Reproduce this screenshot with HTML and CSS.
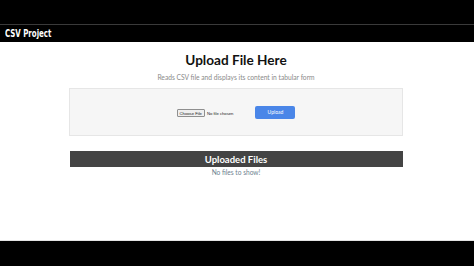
FILE: index.html
```html
<!DOCTYPE html>
<html>
<head>
<meta charset="utf-8">
<link rel="stylesheet" href="styles.css">
</head>
<body>
<div class="page">
  <div class="letterbox-top"></div>
  <nav class="nav"><span class="brand">CSV Project</span></nav>
  <main class="main">
    <h1 class="title">Upload File Here</h1>
    <p class="subtitle">Reads CSV file and displays its content in tabular form</p>
    <div class="upload-box">
      <div class="file-input">
        <span class="choose">Choose File</span>
        <span class="nofile">No file chosen</span>
      </div>
      <button class="upload-btn">Upload</button>
    </div>
    <div class="files-bar">Uploaded Files</div>
    <p class="empty">No files to show!</p>
  </main>
  <div class="letterbox-bottom"></div>
</div>
</body>
</html>
```
FILE: styles.css
```css
html, body {
  margin: 0;
  padding: 0;
  background: #fff;
}
.page {
  width: 474px;
  height: 266px;
  display: flex;
  flex-direction: column;
  overflow: hidden;
  font-family: Lato, "Open Sans", sans-serif;
}
.letterbox-top {
  height: 24px;
  background: #000;
  flex: none;
}
.nav {
  height: 17px;
  background: #000;
  border-top: 1px solid #3a3a3a;
  display: flex;
  align-items: center;
  padding-left: 5px;
  flex: none;
}
.brand {
  color: #fff;
  font-family: "DejaVu Sans Condensed", "DejaVu Sans", sans-serif;
  font-weight: bold;
  font-size: 10px;
  display: inline-block;
  transform: scaleX(0.78);
  transform-origin: left center;
}
.main {
  flex: 1;
  display: flex;
  flex-direction: column;
  align-items: center;
  padding-right: 2px;
}
.title {
  margin: 9px 0 0;
  font-size: 13.6px;
  font-weight: bold;
  color: #111;
  line-height: 18px;
}
.subtitle {
  margin: 4px 0 0;
  font-size: 6.7px;
  color: #8a8a8a;
  line-height: 9px;
}
.upload-box {
  margin-top: 6px;
  width: 332px;
  height: 46px;
  background: #f6f6f6;
  border: 1px solid #e6e6e6;
  display: flex;
  align-items: center;
  justify-content: center;
  gap: 22px;
  box-sizing: content-box;
}
.file-input {
  display: flex;
  align-items: center;
  gap: 2px;
  font-family: "Liberation Sans", Arial, sans-serif;
  font-size: 4.2px;
  color: #222;
  margin-top: 2px;
}
.choose {
  background: #efefef;
  border: 1px solid #8f8f8f;
  border-radius: 1px;
  padding: 0.5px 2px;
  line-height: 5px;
}
.upload-btn {
  width: 40px;
  height: 13px;
  background: #4a86e8;
  border: none;
  border-radius: 2px;
  color: #fff;
  font-family: Lato, sans-serif;
  font-size: 5px;
  padding: 0;
}
.files-bar {
  margin-top: 15px;
  width: 333px;
  height: 16px;
  background: #444;
  color: #fff;
  font-weight: bold;
  font-size: 9.5px;
  display: flex;
  align-items: center;
  justify-content: center;
}
.empty {
  margin: 1px 0 0;
  font-size: 6.6px;
  color: #6d7f8f;
  line-height: 9px;
}
.letterbox-bottom {
  height: 25px;
  background: #000;
  border-top: 1px solid #e2e2e2;
  flex: none;
}
```
